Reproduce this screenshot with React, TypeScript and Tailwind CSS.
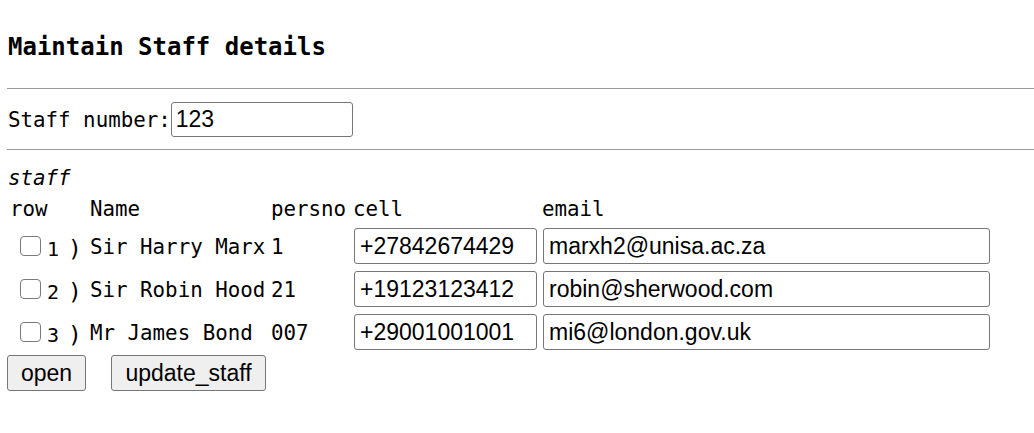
import React from "react";

const rows = [
  { n: "1", name: "Sir Harry Marx", persno: "1", cell: "+27842674429", email: "marxh2@unisa.ac.za" },
  { n: "2", name: "Sir Robin Hood", persno: "21", cell: "+19123123412", email: "robin@sherwood.com" },
  { n: "3", name: "Mr James Bond", persno: "007", cell: "+29001001001", email: "mi6@london.gov.uk" },
];

function Field({ value, w, h }: { value: string; w: string; h: string }) {
  return (
    <div
      className={`${w} ${h} shrink-0 flex items-center border border-[#767676] rounded-[3px] bg-white pl-[5px] font-['Liberation_Sans',Arial,sans-serif] text-[23px] text-black leading-none overflow-hidden whitespace-nowrap`}
    >
      {value}
    </div>
  );
}

export default function App() {
  return (
    <div className="min-h-[433px] w-full bg-white text-black font-['DejaVu_Sans_Mono',monospace] text-[20.8px] leading-[24px] overflow-hidden">
      <div className="pl-2 pt-[33px]">
        <h3 className="h-[28px] text-[24px] leading-[28px] font-bold whitespace-nowrap">Maintain Staff details</h3>
      </div>
      <div className="mt-[27px] ml-[7px] border-t border-[#9a9a9a]" />
      <div className="mt-[13px] pl-2 flex items-center h-[35px]">
        <span className="whitespace-nowrap mt-px">Staff number:</span>
        <div className="w-[182px] h-[35px] shrink-0 flex items-center border border-[#767676] rounded-[3px] bg-white pl-[4px] font-['Liberation_Sans',Arial,sans-serif] text-[23px] leading-none">
          123
        </div>
      </div>
      <div className="mt-[12px] ml-[7px] border-t border-[#9a9a9a]" />
      <div className="mt-[16px] pl-2 h-[24px] italic">staff</div>
      <div className="mt-[7px] flex h-[24px] whitespace-nowrap">
        <div className="w-[90px] shrink-0 pl-[10px]">row</div>
        <div className="w-[181px] shrink-0">Name</div>
        <div className="w-[83px] shrink-0">persno</div>
        <div className="w-[189px] shrink-0 -ml-px">cell</div>
        <div className="w-[447px] shrink-0">email</div>
      </div>
      <div className="mt-[4px]">
        {rows.map((r) => (
          <div key={r.n} className="h-[43px] pt-[3px] flex whitespace-nowrap">
            <div className="w-[90px] shrink-0 h-[36px] flex items-center pl-[20px]">
              <div className="w-[21px] h-[20px] shrink-0 border-[1.5px] border-[#7a7a7a] rounded-[4px] bg-white" />
              <span className="ml-[6px] text-[20px] leading-[24px] mt-[5px]">{r.n}</span>
              <span className="ml-[9px] text-[23px] leading-[24px] mt-[6px]">)</span>
            </div>
            <div className="w-[181px] shrink-0 h-[36px] flex items-center pt-px">{r.name}</div>
            <div className="w-[83px] shrink-0 h-[36px] flex items-center pt-px">{r.persno}</div>
            <div className="w-[189px] shrink-0">
              <Field value={r.cell} w="w-[183px]" h="h-[36px]" />
            </div>
            <div className="w-[447px] shrink-0">
              <Field value={r.email} w="w-[447px]" h="h-[36px]" />
            </div>
          </div>
        ))}
      </div>
      <div className="mt-px flex pl-[7px] font-['Liberation_Sans',Arial,sans-serif] text-[23px]">
        <div className="w-[79px] h-[36px] flex items-center justify-center border border-[#767676] rounded-[3px] bg-[#efefef] leading-none">
          open
        </div>
        <div className="ml-[25px] w-[155px] h-[36px] flex items-center justify-center border border-[#767676] rounded-[3px] bg-[#efefef] leading-none">
          update_staff
        </div>
      </div>
    </div>
  );
}
